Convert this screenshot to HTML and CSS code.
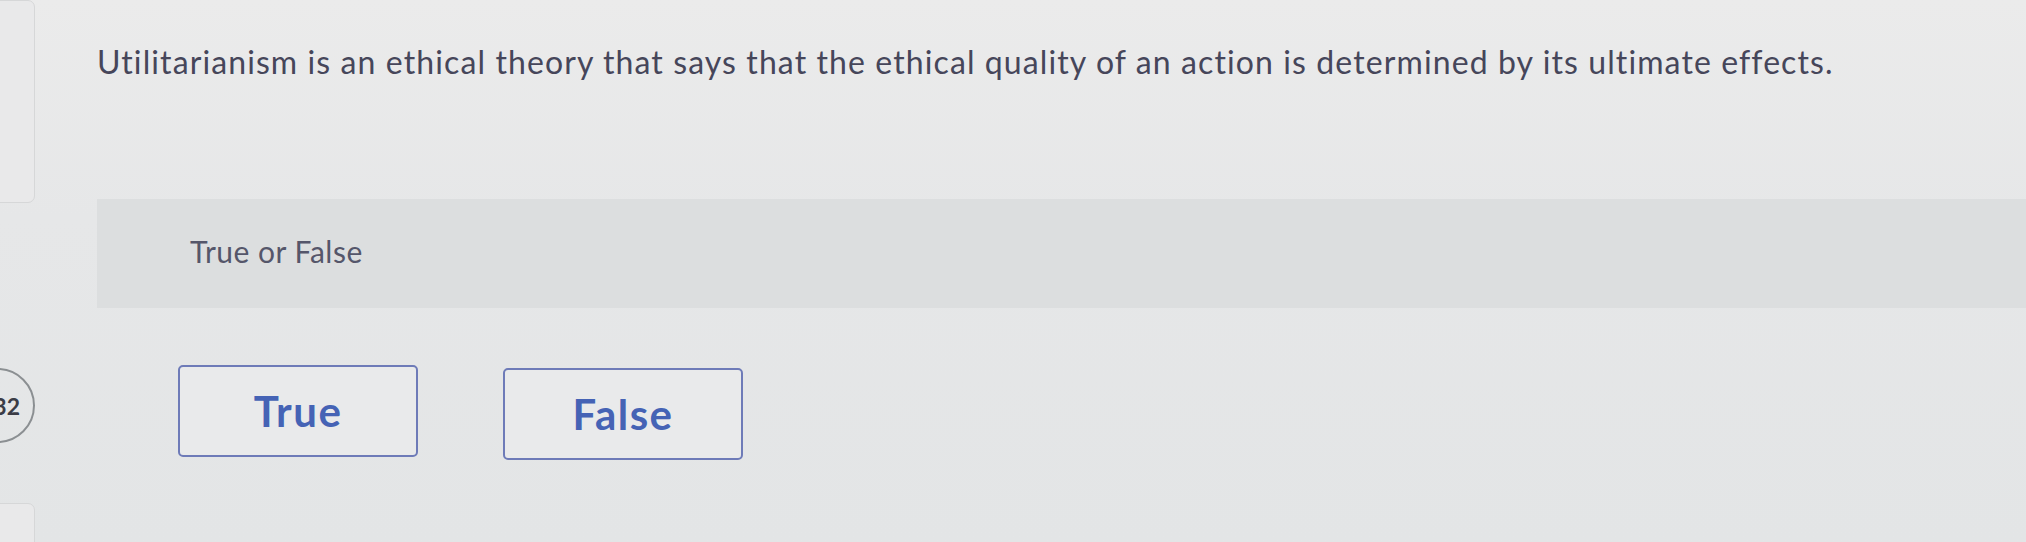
FILE: index.html
```html
<!DOCTYPE html>
<html lang="en">
<head>
    <meta charset="UTF-8">
    <meta name="viewport" content="width=device-width, initial-scale=1.0">
    <title>True or False</title>
    <link rel="stylesheet" href="styles.css">
</head>
<body>
    <div class="page">
        <aside class="rail">
            <div class="rail-card"></div>
            <div class="qnum">32</div>
            <div class="rail-card rail-card-next"></div>
        </aside>

        <main class="question">
            <p class="prompt">Utilitarianism is an ethical theory that says that the ethical quality of an action is determined by its ultimate effects.</p>

            <div class="instructions">
                <span>True or False</span>
            </div>

            <div class="answers">
                <button class="answer">True</button>
                <button class="answer answer-false">False</button>
            </div>
        </main>
    </div>
</body>
</html>
```

FILE: styles.css
```css
body {
    margin: 0;
    min-height: 100vh;
    font-family: Lato, 'Open Sans', sans-serif;
    background: linear-gradient(180deg, #ebebeb 0%, #e6e7e8 40%, #e3e5e6 100%);
    overflow: hidden;
}
.page {
    display: flex;
    height: 542px;
}
.rail {
    width: 35px;
    flex-shrink: 0;
    display: flex;
    flex-direction: column;
}
.rail-card {
    flex-shrink: 0;
    height: 201px;
    margin-left: -10px;
    border: 1px solid #d6d7d8;
    border-radius: 7px;
    background: #e9e9ea;
}
.rail-card-next {
    margin-top: 60px;
    height: 60px;
}
.qnum {
    width: 75px;
    height: 75px;
    flex-shrink: 0;
    margin: 165px 0 0 -40px;
    border: 2px solid #8b8f92;
    border-radius: 50%;
    display: flex;
    align-items: center;
    justify-content: flex-end;
    padding-right: 13px;
    box-sizing: border-box;
    font-size: 23px;
    font-weight: 700;
    color: #3b3c46;
}
.question {
    flex: 1;
    padding-left: 62px;
}
.prompt {
    margin: 0;
    padding-top: 42px;
    font-size: 32px;
    line-height: 40px;
    letter-spacing: 1.1px;
    color: #46465a;
}
.instructions {
    margin-top: 117px;
    height: 109px;
    background: #dcdedf;
    padding-left: 93px;
    box-sizing: border-box;
    padding-top: 35px;
    font-size: 30px;
    line-height: 34px;
    letter-spacing: 0.5px;
    color: #55566a;
}
.answers {
    display: flex;
    gap: 85px;
    padding: 57px 0 0 81px;
}
.answer {
    width: 240px;
    height: 92px;
    border: 2px solid #6e7bb8;
    border-radius: 5px;
    background: #e9eaeb;
    font-family: Lato, 'Open Sans', sans-serif;
    font-size: 42px;
    font-weight: 700;
    letter-spacing: 1.5px;
    color: #4563b5;
    padding: 0;
}
.answer-false {
    margin-top: 3px;
}
```
